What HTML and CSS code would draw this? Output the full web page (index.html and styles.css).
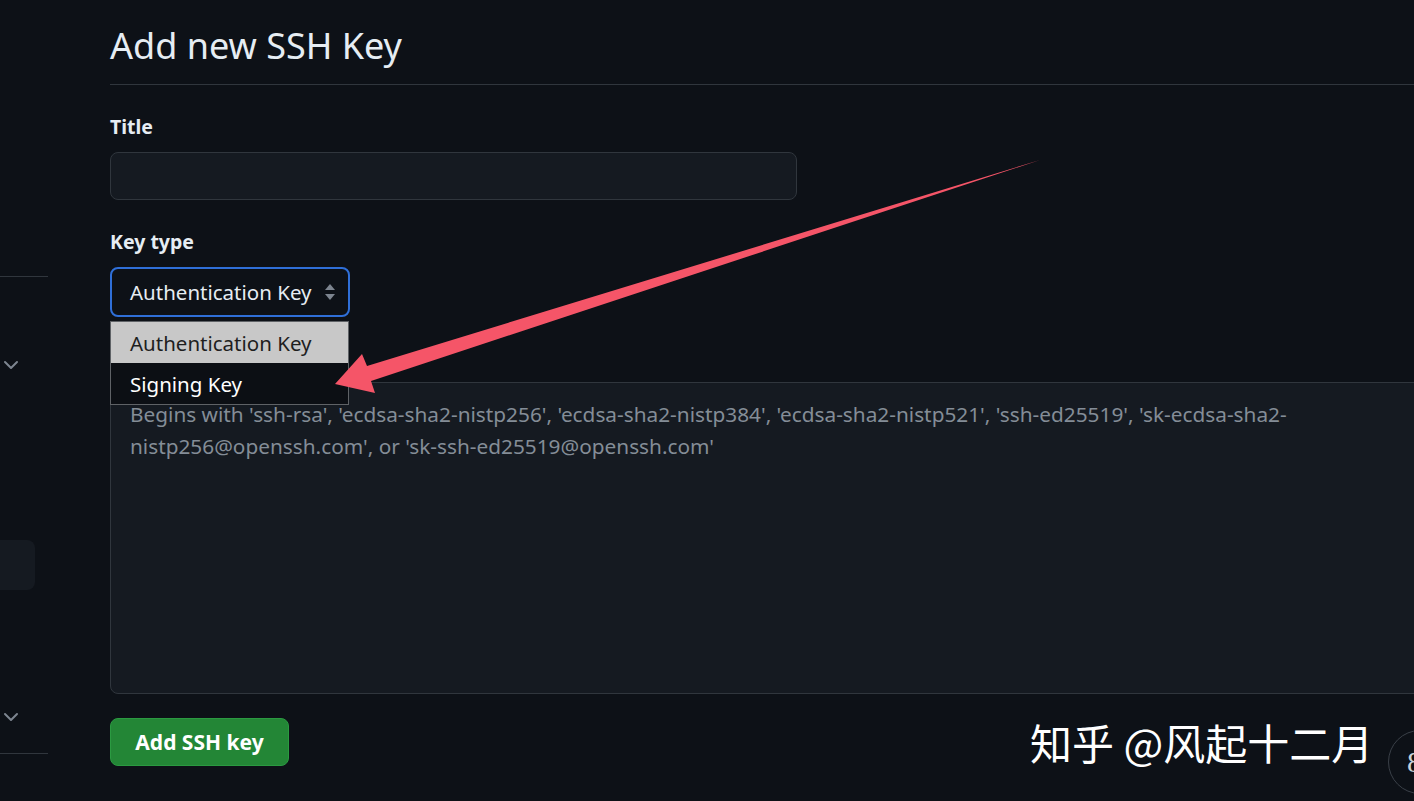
FILE: index.html
```html
<!DOCTYPE html>
<html lang="en">
<head>
<meta charset="utf-8">
<title>Add new SSH Key</title>
<link rel="stylesheet" href="styles.css">
</head>
<body>
<div class="page">
  <aside class="sidenav">
    <div class="nav-rule nav-rule-top"></div>
    <svg class="nav-chev nav-chev-one" width="18" height="12" viewBox="0 0 18 12"><polyline points="3,3 9,9 15,3" fill="none" stroke="#7d8590" stroke-width="2" stroke-linecap="round" stroke-linejoin="round"/></svg>
    <div class="nav-pill"></div>
    <svg class="nav-chev nav-chev-two" width="18" height="12" viewBox="0 0 18 12"><polyline points="3,3 9,9 15,3" fill="none" stroke="#7d8590" stroke-width="2" stroke-linecap="round" stroke-linejoin="round"/></svg>
    <div class="nav-rule nav-rule-bottom"></div>
  </aside>
  <main class="content">
    <div class="subhead"><h2 class="subhead-heading">Add new SSH Key</h2></div>
    <form class="ssh-form">
      <label class="form-label">Title</label>
      <div class="text-input"></div>
      <label class="form-label label-gap">Key type</label>
      <div class="select-wrap">
        <div class="select">
          <span class="select-value">Authentication Key</span>
          <svg class="select-arrows" width="12" height="18" viewBox="0 0 12 18"><polygon points="6,1 11,7 1,7" fill="#7d8590"/><polygon points="1,11 11,11 6,17" fill="#7d8590"/></svg>
        </div>
        <ul class="select-menu">
          <li class="option option-selected">Authentication Key</li>
          <li class="option">Signing Key</li>
        </ul>
      </div>
      <div class="key-area"><span class="placeholder">Begins with 'ssh-rsa', 'ecdsa-sha2-nistp256', 'ecdsa-sha2-nistp384', 'ecdsa-sha2-nistp521', 'ssh-ed25519', 'sk-ecdsa-sha2-<br>nistp256@openssh.com', or 'sk-ssh-ed25519@openssh.com'</span></div>
      <button type="button" class="btn-primary">Add SSH key</button>
    </form>
  </main>
</div>
<svg class="annotation" width="1414" height="801" viewBox="0 0 1414 801">
  <polygon points="335,384 362,354 367,366 1040,160 371,381 375,393" fill="#f55568"/>
</svg>
<div class="watermark">知乎 @风起十二月</div>
<div class="float-btn"><span class="float-glyph">8</span></div>
</body>
</html>
```

FILE: styles.css
```css
html, body {
  margin: 0;
  padding: 0;
}
body {
  background: #0d1117;
  color: #e6edf3;
  font-family: "Noto Sans", "Open Sans", sans-serif;
  width: 1414px;
  height: 801px;
  overflow: hidden;
  position: relative;
}
.page {
  display: flex;
  align-items: flex-start;
}
.sidenav {
  width: 48px;
  flex: none;
  display: flex;
  flex-direction: column;
}
.nav-rule {
  height: 1px;
  background: #30363d;
}
.nav-rule-top { margin-top: 276px; }
.nav-chev { display: block; margin-left: 2px; }
.nav-chev-one { margin-top: 82px; }
.nav-pill {
  margin-top: 169px;
  width: 35px;
  height: 50px;
  background: #151a21;
  border-radius: 0 8px 8px 0;
}
.nav-chev-two { margin-top: 121px; }
.nav-rule-bottom { margin-top: 30px; }

.content {
  margin-left: 62px;
  width: 1400px;
  flex: none;
  padding-top: 22px;
}
.subhead {
  padding-bottom: 14px;
  border-bottom: 1px solid #30363d;
}
.subhead-heading {
  margin: 0;
  font-size: 36px;
  line-height: 48px;
  font-weight: 400;
  color: #e6edf3;
}
.ssh-form {
  display: flex;
  flex-direction: column;
  align-items: flex-start;
}
.form-label {
  display: block;
  margin-top: 27px;
  font-size: 19.5px;
  line-height: 30px;
  font-weight: 700;
  color: #e6edf3;
}
.text-input {
  margin-top: 10px;
  width: 685px;
  height: 46px;
  background: #151a21;
  border: 1px solid #30363d;
  border-radius: 8px;
}
.select-wrap {
  position: relative;
  margin-top: 10px;
}
.select {
  box-sizing: border-box;
  width: 240px;
  height: 50px;
  border: 2px solid #2f6fd8;
  border-radius: 8px;
  background: #0d1117;
  display: flex;
  align-items: center;
  padding-left: 18px;
  padding-right: 10px;
  gap: 12px;
  font-size: 20.5px;
  color: #e6edf3;
}
.select-value { white-space: nowrap; }
.select-arrows { display: block; flex: none; }
.select-menu {
  position: absolute;
  top: 54px;
  left: 0;
  margin: 0;
  padding: 0;
  list-style: none;
  width: 237px;
  border: 1px solid #5f6266;
  background: #0c0f14;
  z-index: 2;
}
.option {
  height: 41px;
  display: flex;
  align-items: center;
  padding-left: 19px;
  font-size: 20.5px;
  color: #ffffff;
  white-space: nowrap;
}
.option-selected {
  background: #c8c8c8;
  color: #1e1e1e;
}
.key-area {
  box-sizing: border-box;
  margin-top: 65px;
  width: 1400px;
  height: 312px;
  background: #151a21;
  border: 1px solid #30363d;
  border-radius: 8px 0 0 8px;
  padding: 15px 19px;
  font-size: 20.8px;
  line-height: 32px;
}
.placeholder { color: #848d97; }
.btn-primary {
  margin-top: 24px;
  width: 179px;
  height: 48px;
  background: #238636;
  border: 1px solid #2b9a41;
  border-radius: 8px;
  color: #ffffff;
  font-family: "Noto Sans", "Open Sans", sans-serif;
  font-size: 21px;
  font-weight: 700;
  padding: 0;
}
.annotation {
  position: absolute;
  left: 0;
  top: 0;
  pointer-events: none;
  z-index: 5;
}
.watermark {
  position: absolute;
  left: 1030px;
  top: 712px;
  font-family: "Noto Sans CJK SC", "Noto Sans", sans-serif;
  font-size: 42px;
  line-height: 60px;
  color: #ffffff;
  white-space: nowrap;
  z-index: 6;
}
.float-btn {
  position: absolute;
  left: 1388px;
  top: 730px;
  width: 64px;
  height: 64px;
  border: 1px solid #3a4048;
  border-radius: 50%;
  display: flex;
  align-items: center;
  padding-left: 18px;
  box-sizing: border-box;
}
.float-glyph {
  font-family: "Liberation Serif", serif;
  font-size: 30px;
  color: #c9d1d9;
}
```
